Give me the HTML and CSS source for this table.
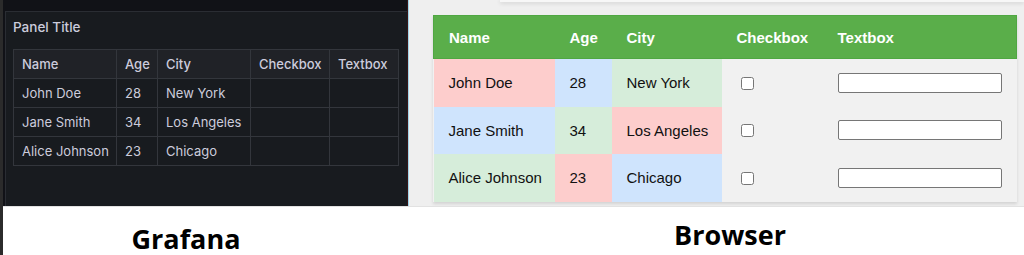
FILE: index.html
```html
<!DOCTYPE html>
<html>
<head>
<meta charset="utf-8">
<link rel="stylesheet" href="styles.css">
</head>
<body>
<div class="page">
  <div class="top">
    <section class="grafana">
      <div class="panel">
        <div class="panel-title">Panel Title</div>
        <table class="gtable">
          <colgroup>
            <col class="gc-name"><col class="gc-age"><col class="gc-city"><col class="gc-check"><col class="gc-text">
          </colgroup>
          <thead>
            <tr><th>Name</th><th>Age</th><th>City</th><th>Checkbox</th><th>Textbox</th></tr>
          </thead>
          <tbody>
            <tr><td>John Doe</td><td>28</td><td>New York</td><td></td><td></td></tr>
            <tr><td>Jane Smith</td><td>34</td><td>Los Angeles</td><td></td><td></td></tr>
            <tr><td>Alice Johnson</td><td>23</td><td>Chicago</td><td></td><td></td></tr>
          </tbody>
        </table>
      </div>
    </section>
    <section class="browser">
      <div class="topbar"></div>
      <table class="btable">
        <colgroup>
          <col class="bc-name"><col class="bc-age"><col class="bc-city"><col class="bc-check"><col class="bc-text">
        </colgroup>
        <thead>
          <tr><th>Name</th><th>Age</th><th>City</th><th>Checkbox</th><th>Textbox</th></tr>
        </thead>
        <tbody>
          <tr>
            <td class="pink">John Doe</td><td class="blue">28</td><td class="green">New York</td>
            <td><input type="checkbox"></td><td><input type="text" class="tb"></td>
          </tr>
          <tr>
            <td class="blue">Jane Smith</td><td class="green">34</td><td class="pink">Los Angeles</td>
            <td><input type="checkbox"></td><td><input type="text" class="tb"></td>
          </tr>
          <tr>
            <td class="green">Alice Johnson</td><td class="pink">23</td><td class="blue">Chicago</td>
            <td><input type="checkbox"></td><td><input type="text" class="tb"></td>
          </tr>
        </tbody>
      </table>
    </section>
  </div>
  <div class="labels">
    <div class="label label-grafana">Grafana</div>
    <div class="label label-browser">Browser</div>
  </div>
</div>
</body>
</html>
```

FILE: styles.css
```css
html, body {
  margin: 0;
  padding: 0;
  background: #ffffff;
}

.page {
  width: 1021px;
  height: 255px;
  border-left: 3px solid #2b2b2b;
  display: flex;
  flex-direction: column;
}

.top {
  height: 206px;
  display: flex;
}

/* ---------- Grafana side ---------- */
.grafana {
  width: 405px;
  background: #111217;
  padding: 11px 0 0 2px;
  box-sizing: border-box;
  display: flex;
  border-right: 1px solid #3a1618;
}

.panel {
  flex: 1;
  background: #181b1f;
  border: 1px solid #2a2d33;
  border-bottom: none;
  border-right: none;
  padding: 0 0 0 7px;
  font-family: Inter, "Noto Sans", sans-serif;
  color: #ccccdc;
}

.panel-title {
  height: 31px;
  line-height: 30px;
  font-size: 13.5px;
  font-weight: 500;
}

.gtable {
  margin-top: 6px;
  border-collapse: collapse;
  table-layout: fixed;
  width: 385px;
  font-size: 13px;
}

.gc-name { width: 103px; }
.gc-age { width: 41px; }
.gc-city { width: 93px; }
.gc-check { width: 79px; }
.gc-text { width: 69px; }

.gtable th,
.gtable td {
  border: 1px solid #33363c;
  height: 28px;
  padding: 0 0 0 8px;
  text-align: left;
  white-space: nowrap;
  overflow: hidden;
}

.gtable th {
  background: #202227;
  font-weight: 500;
}

.gtable td {
  background: #181b1f;
  font-weight: 400;
}

/* ---------- Browser side ---------- */
.browser {
  flex: 1;
  background: #efefef;
  border-left: 1px solid #9fd6ea;
  display: flex;
  flex-direction: column;
}

.topbar {
  height: 2px;
  margin-left: 91px;
  background: #f7f7f7;
  box-shadow: 0 1px 4px rgba(0, 0, 0, 0.18);
}

.btable {
  margin: 13px 0 0 24px;
  width: 583px;
  border-collapse: collapse;
  table-layout: fixed;
  font-family: "Liberation Sans", Arial, sans-serif;
  font-size: 15px;
  background: #f1f1f1;
  box-shadow: 0 2px 3px rgba(0, 0, 0, 0.12);
}

.bc-name { width: 121px; }
.bc-age { width: 57px; }
.bc-city { width: 110px; }
.bc-check { width: 101px; }
.bc-text { width: 194px; }

.btable thead tr {
  background: #5aae4a;
  border: 1px solid #4fa742;
}

.btable th {
  height: 42px;
  padding: 0 15px;
  color: #ffffff;
  font-weight: bold;
  text-align: left;
  white-space: nowrap;
}

.btable td {
  height: 47.5px;
  padding: 0 15px;
  color: #111111;
  white-space: nowrap;
}

.pink { background: #fdcdcc; }
.blue { background: #cfe4fd; }
.green { background: #d6edda; }

.btable input[type="checkbox"] {
  margin: 3px 3px 3px 4px;
  vertical-align: middle;
}

.tb {
  width: 164px;
  height: 20px;
  box-sizing: border-box;
  border: 1px solid #767676;
  border-radius: 2px;
  padding: 1px 2px;
  background: #ffffff;
  vertical-align: middle;
}

/* ---------- Labels ---------- */
.labels {
  flex: 1;
  display: flex;
  border-top: 1px solid #e2e2e2;
  font-family: "Open Sans", sans-serif;
  font-weight: 700;
  font-size: 27px;
  color: #000000;
}

.label {
  line-height: 28px;
  text-align: center;
}

.label-grafana {
  width: 366px;
  padding-top: 18px;
}

.label-browser {
  margin-left: 67px;
  width: 588px;
  padding-top: 14px;
}
```
